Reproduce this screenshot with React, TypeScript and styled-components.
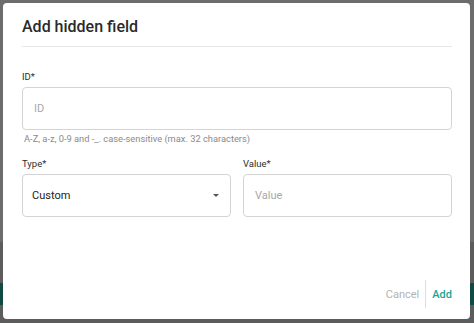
import styled, { createGlobalStyle } from 'styled-components';

const GlobalStyle = createGlobalStyle`
  html, body {
    margin: 0;
    padding: 0;
  }
  body {
    background: #6a6a6a;
    font-family: Roboto, "Noto Sans", Arial, sans-serif;
  }
`;

const Backdrop = styled.div`
  width: 474px;
  height: 323px;
  box-sizing: border-box;
  padding: 3px 4px 4px 3px;
  background: linear-gradient(
    to bottom,
    #6c6c6c 0,
    #6c6c6c 242px,
    #5c5c5c 242px,
    #5c5c5c 283px,
    #0f4a44 283px,
    #0f4a44 305px,
    #5c5c5c 305px
  );
`;

const Dialog = styled.div`
  height: 100%;
  background: #fff;
  border-radius: 4px;
  display: flex;
  flex-direction: column;
  padding: 0 18px 0 19px;
  box-sizing: border-box;
`;

const Header = styled.div`
  padding: 12px 0 7px;
  border-bottom: 1px solid #e8e8e8;
`;

const Title = styled.h2`
  margin: 0;
  font-size: 16px;
  line-height: 24px;
  font-weight: 500;
  color: #2a2a2a;
`;

const Body = styled.div`
  flex: 1;
  padding-top: 22px;
  display: flex;
  flex-direction: column;
`;

const Field = styled.div`
  display: flex;
  flex-direction: column;
  min-width: 0;
`;

const Row = styled.div`
  display: grid;
  grid-template-columns: 1fr 1fr;
  gap: 12px;
  margin-top: 10px;
`;

const Label = styled.label`
  font-size: 9.5px;
  line-height: 16px;
  color: #2e2e2e;
  margin-bottom: 2px;
`;

const Box = styled.div`
  height: 43px;
  box-sizing: border-box;
  border: 1px solid #d4d4d4;
  border-radius: 4px;
  display: flex;
  align-items: center;
  padding: 0 11px 0 11px;
  font-size: 11px;
`;

const Placeholder = styled.span`
  color: #a8a8a8;
`;

const SelectValue = styled.span`
  flex: 1;
  color: #222;
  margin-left: -2px;
`;

const Caret = styled.span`
  width: 0;
  height: 0;
  border-left: 3.5px solid transparent;
  border-right: 3.5px solid transparent;
  border-top: 3.5px solid #555;
`;

const Hint = styled.div`
  margin-top: 2px;
  font-size: 9.3px;
  line-height: 14px;
  color: #8a8a8a;
  padding-left: 2px;
`;

const Footer = styled.div`
  display: flex;
  justify-content: flex-end;
  align-items: center;
  padding-bottom: 11px;
`;

const Divider = styled.span`
  width: 1px;
  height: 28px;
  background: #d8dfe3;
  margin: 0 6px;
`;

const ActionButton = styled.button<{ $primary?: boolean }>`
  border: none;
  background: none;
  padding: 0;
  font-family: inherit;
  font-size: 11px;
  font-weight: ${(p) => (p.$primary ? 500 : 400)};
  color: ${(p) => (p.$primary ? '#1aa396' : '#b3b3b3')};
  cursor: pointer;
`;

export default function App() {
  return (
    <>
      <GlobalStyle />
      <Backdrop>
        <Dialog>
          <Header>
            <Title>Add hidden field</Title>
          </Header>
          <Body>
            <Field>
              <Label>ID*</Label>
              <Box>
                <Placeholder>ID</Placeholder>
              </Box>
              <Hint>A-Z, a-z, 0-9 and -_. case-sensitive (max. 32 characters)</Hint>
            </Field>
            <Row>
              <Field>
                <Label>Type*</Label>
                <Box>
                  <SelectValue>Custom</SelectValue>
                  <Caret />
                </Box>
              </Field>
              <Field>
                <Label>Value*</Label>
                <Box>
                  <Placeholder>Value</Placeholder>
                </Box>
              </Field>
            </Row>
          </Body>
          <Footer>
            <ActionButton>Cancel</ActionButton>
            <Divider />
            <ActionButton $primary>Add</ActionButton>
          </Footer>
        </Dialog>
      </Backdrop>
    </>
  );
}
